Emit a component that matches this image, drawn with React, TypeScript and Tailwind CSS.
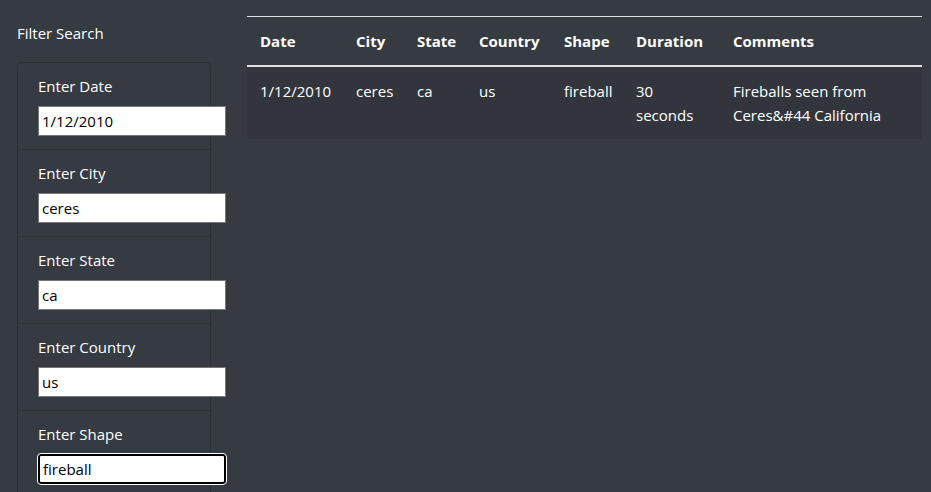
import { useState } from "react";

const FILTERS = [
  { id: "date", label: "Enter Date", value: "1/12/2010" },
  { id: "city", label: "Enter City", value: "ceres" },
  { id: "state", label: "Enter State", value: "ca" },
  { id: "country", label: "Enter Country", value: "us" },
  { id: "shape", label: "Enter Shape", value: "fireball" },
];

const COLUMNS = [
  { key: "date", title: "Date", width: "w-[96px]" },
  { key: "city", title: "City", width: "w-[61px]" },
  { key: "state", title: "State", width: "w-[62px]" },
  { key: "country", title: "Country", width: "w-[85px]" },
  { key: "shape", title: "Shape", width: "w-[72px]" },
  { key: "duration", title: "Duration", width: "w-[97px]" },
  { key: "comments", title: "Comments", width: "w-[202px]" },
];

const ROWS: Record<string, string>[] = [
  {
    date: "1/12/2010",
    city: "ceres",
    state: "ca",
    country: "us",
    shape: "fireball",
    duration: "30 seconds",
    comments: "Fireballs seen from Ceres&#44 California",
  },
];

export default function App() {
  const [values, setValues] = useState<Record<string, string>>(
    Object.fromEntries(FILTERS.map((f) => [f.id, f.value]))
  );

  return (
    <div
      className="min-h-[492px] w-full bg-[#363a41] text-white flex overflow-hidden"
      style={{ fontFamily: '"Open Sans", "Noto Sans", sans-serif' }}
    >
      {/* sidebar */}
      <aside className="w-[230px] shrink-0 pl-[17px] pt-[23px]">
        <p className="text-[15px] leading-[20px] mb-[19px]">Filter Search</p>
        <ul className="w-[194px] border border-[#2c3035] rounded-[4px]">
          {FILTERS.map((f, i) => (
            <li
              key={f.id}
              className={`px-[20px] pt-[11px] pb-[13px] ${
                i > 0 ? "border-t border-[#2c3035]" : ""
              }`}
            >
              <label
                htmlFor={f.id}
                className="block text-[15px] leading-[24px] mb-[8px]"
              >
                {f.label}
              </label>
              <input
                id={f.id}
                value={values[f.id]}
                onChange={(e) =>
                  setValues((prev) => ({ ...prev, [f.id]: e.target.value }))
                }
                className={`block w-[188px] h-[30px] bg-white text-black text-[15px] px-[3px] ${
                  f.id === "shape"
                    ? "border-2 border-black rounded-[3px] outline outline-1 outline-white"
                    : "border border-[#767676]"
                }`}
              />
            </li>
          ))}
        </ul>
      </aside>

      {/* results table */}
      <main className="pt-[16px] pl-[17px]">
        <table className="table-fixed border-collapse w-[675px] text-[15px]">
          <thead>
            <tr className="border-t border-[#dee2e6]">
              {COLUMNS.map((c) => (
                <th
                  key={c.key}
                  className={`${c.width} text-left font-bold pl-[13px] pr-[11px] pt-[12px] pb-[12px] leading-[24px] border-b-2 border-[#dee2e6]`}
                >
                  {c.title}
                </th>
              ))}
            </tr>
          </thead>
          <tbody>
            {ROWS.map((r, i) => (
              <tr key={i} className="bg-[#32363c]">
                {COLUMNS.map((c) => (
                  <td
                    key={c.key}
                    className="align-top pl-[13px] pr-[11px] pt-[12px] pb-[12px] leading-[24px]"
                  >
                    {r[c.key]}
                  </td>
                ))}
              </tr>
            ))}
          </tbody>
        </table>
      </main>
    </div>
  );
}
